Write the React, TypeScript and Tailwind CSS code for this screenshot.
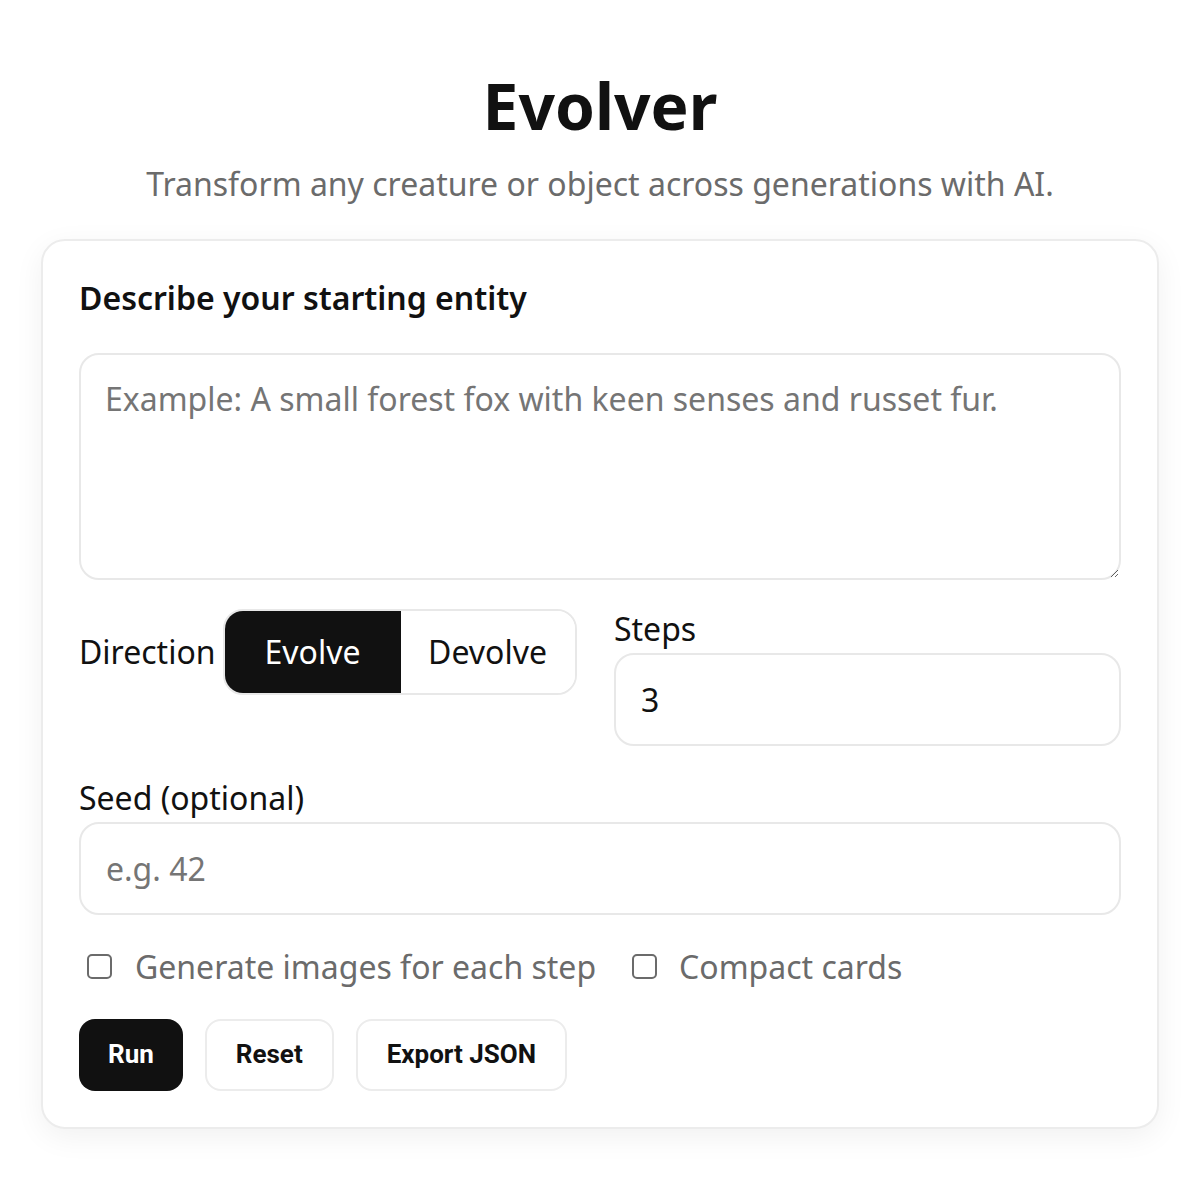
import { useState } from 'react';

export default function App() {
  const [direction, setDirection] = useState<'evolve' | 'devolve'>('evolve');
  const [steps, setSteps] = useState('3');
  const [seed, setSeed] = useState('');
  const [prompt, setPrompt] = useState('');
  const [withImages, setWithImages] = useState(false);
  const [compact, setCompact] = useState(false);

  return (
    <div className="min-h-screen bg-white font-['Noto_Sans',sans-serif] text-[#111111] flex flex-col items-center">
      <h1 className="pt-[68px] text-[64px] leading-[1.2] font-bold">Evolver</h1>
      <p className="mt-[15px] text-[32px] leading-[48px] text-[#6b6b6b]">
        Transform any creature or object across generations with AI.
      </p>

      <div className="mt-[31px] w-[1118px] rounded-[24px] border-2 border-[#ececec] bg-white p-[36px] shadow-[0_8px_30px_rgba(0,0,0,0.06)]">
        <h2 className="text-[32px] leading-[42px] font-semibold">Describe your starting entity</h2>

        <textarea
          value={prompt}
          onChange={(e) => setPrompt(e.target.value)}
          placeholder="Example: A small forest fox with keen senses and russet fur."
          className="mt-[34px] block w-full h-[227px] rounded-[20px] border-2 border-[#e8e8e8] px-[24px] pt-[20px] text-[32px] leading-[48px] placeholder:text-[#757575] outline-none"
        />

        <div className="mt-[29px] grid grid-cols-2 gap-x-[28px]">
          <div className="flex items-start gap-[7px]">
            <span className="h-[86px] flex items-center text-[32px] leading-[48px]">Direction</span>
            <div className="flex rounded-[20px] border-2 border-[#e8e8e8] overflow-hidden">
              <button
                onClick={() => setDirection('evolve')}
                className={`w-[176px] h-[82px] text-[32px] ${direction === 'evolve' ? 'bg-[#111111] text-white' : 'bg-white text-[#111111]'}`}
              >
                Evolve
              </button>
              <button
                onClick={() => setDirection('devolve')}
                className={`w-[174px] h-[82px] text-[32px] ${direction === 'devolve' ? 'bg-[#111111] text-white' : 'bg-white text-[#111111]'}`}
              >
                Devolve
              </button>
            </div>
          </div>

          <div className="flex flex-col">
            <label className="text-[32px] leading-[40px]">Steps</label>
            <input
              value={steps}
              onChange={(e) => setSteps(e.target.value)}
              className="mt-[4px] h-[93px] rounded-[20px] border-2 border-[#e8e8e8] px-[25px] text-[32px] outline-none"
            />
          </div>
        </div>

        <div className="mt-[32px] flex flex-col">
          <label className="text-[32px] leading-[40px]">Seed (optional)</label>
          <input
            value={seed}
            onChange={(e) => setSeed(e.target.value)}
            placeholder="e.g. 42"
            className="mt-[4px] h-[93px] rounded-[20px] border-2 border-[#e8e8e8] px-[25px] text-[32px] placeholder:text-[#757575] outline-none"
          />
        </div>

        <div className="mt-[32px] flex items-center gap-[36px] text-[32px] leading-[40px] text-[#6b6b6b]">
          <label className="flex items-center gap-[23px] pl-[8px]">
            <input
              type="checkbox"
              checked={withImages}
              onChange={(e) => setWithImages(e.target.checked)}
              className="appearance-none w-[25px] h-[25px] rounded-[5px] border-2 border-[#6b6b6b] bg-white checked:bg-[#111111]"
            />
            Generate images for each step
          </label>
          <label className="flex items-center gap-[22px]">
            <input
              type="checkbox"
              checked={compact}
              onChange={(e) => setCompact(e.target.checked)}
              className="appearance-none w-[25px] h-[25px] rounded-[5px] border-2 border-[#6b6b6b] bg-white checked:bg-[#111111]"
            />
            Compact cards
          </label>
        </div>

        <div className="mt-[32px] flex gap-[22px] font-['Roboto',sans-serif] font-bold text-[26px]">
          <button className="h-[72px] px-[29px] rounded-[16px] bg-[#111111] text-white">Run</button>
          <button className="h-[72px] px-[29px] rounded-[16px] bg-white text-[#111111] border-2 border-[#ececec]">Reset</button>
          <button className="h-[72px] px-[29px] rounded-[16px] bg-white text-[#111111] border-2 border-[#ececec]">Export JSON</button>
        </div>
      </div>
    </div>
  );
}
